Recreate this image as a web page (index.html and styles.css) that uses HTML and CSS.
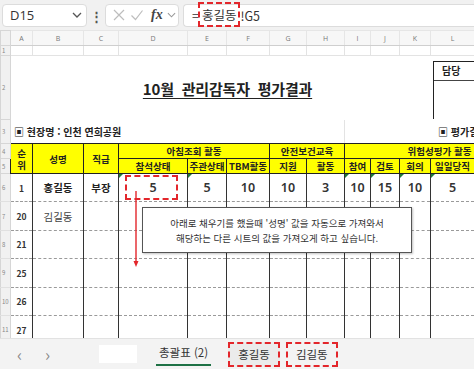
FILE: index.html
```html
<!DOCTYPE html>
<html lang="ko">
  <head>
    <meta charset="UTF-8" />
    <title>평가결과</title>
    <link rel="stylesheet" href="styles.css">
  </head>
  <body>
    <div class="page">
      <div class="topbar">
        <div class="namebox">
          <span>D15</span>
          <svg class="chev" width="10" height="6" viewBox="0 0 10 6"><path d="M1 1l4 4 4-4" fill="none" stroke="#555" stroke-width="1.3"/></svg>
        </div>
        <div class="dots">&#8942;</div>
        <div class="fxbox">
          <svg width="14" height="14" viewBox="0 0 14 14"><path d="M2 2l10 10M12 2L2 12" stroke="#bdbdbd" stroke-width="1.2"/></svg>
          <svg width="14" height="14" viewBox="0 0 14 14"><path d="M1.5 7.5l4 4 7-9" fill="none" stroke="#bdbdbd" stroke-width="1.2"/></svg>
          <span class="fx">fx</span>
          <svg width="9" height="6" viewBox="0 0 10 6"><path d="M1 1l4 4 4-4" fill="none" stroke="#999" stroke-width="1.2"/></svg>
        </div>
        <div class="formula"><span class="eq">=</span><span class="mark">홍길동</span>!G5</div>
      </div>

      <div class="sheet">
        <table class="grid">
          <colgroup>
            <col style="width:10px"><col style="width:22px"><col style="width:51px"><col style="width:35px">
            <col style="width:69px"><col style="width:39px"><col style="width:43px"><col style="width:37px">
            <col style="width:38px"><col style="width:26px"><col style="width:29px"><col style="width:31px">
            <col style="width:44px"><col style="width:60px">
          </colgroup>
          <tr class="colhead">
            <th class="rh"></th><th>A</th><th>B</th><th>C</th><th>D</th><th>E</th><th>F</th><th>G</th>
            <th>H</th><th>I</th><th>J</th><th>K</th><th>L</th><th>M</th>
          </tr>
          <tr class="r-blank">
            <td class="rh">1</td><td></td><td></td><td></td><td></td><td></td><td></td><td></td>
            <td></td><td></td><td></td><td></td><td></td><td></td>
          </tr>
          <tr class="r-title">
            <td class="rh">2</td>
            <td colspan="11" class="title"><span>10월&nbsp; 관리감독자&nbsp; 평가결과</span></td>
            <td colspan="2" class="sign-cell">
              <div class="sign">
                <div class="sign-head">담당</div>
                <div class="sign-body"></div>
              </div>
            </td>
          </tr>
          <tr class="r-site">
            <td class="rh">3</td>
            <td colspan="8" class="site">▣ 현장명 : 인천 연희공원</td>
            <td colspan="3" class="site-gap"></td>
            <td colspan="2" class="site site-right">▣ 평가결과</td>
          </tr>
          <tr class="r-head">
            <td class="rh">4</td>
            <th rowspan="2" class="hd">순<br>위</th>
            <th rowspan="2" class="hd">성명</th>
            <th rowspan="2" class="hd">직급</th>
            <th colspan="3" class="hd">아침조회 활동</th>
            <th colspan="2" class="hd">안전보건교육</th>
            <th colspan="5" class="hd">위험성평가 활동</th>
          </tr>
          <tr class="r-head">
            <td class="rh">5</td>
            <th class="hd">참석상태</th><th class="hd">주관상태</th><th class="hd">TBM활동</th>
            <th class="hd">지원</th><th class="hd">활동</th>
            <th class="hd">참여</th><th class="hd">검토</th><th class="hd">회의</th><th class="hd">일일당직</th><th class="hd">비고</th>
          </tr>
          <tr class="r-data">
            <td class="rh">6</td>
            <td class="no">1</td><td class="name">홍길동</td><td class="name">부장</td>
            <td class="val flag">5</td><td class="val flag">5</td><td class="val">10</td>
            <td class="val">10</td><td class="val">3</td>
            <td class="val flag">10</td><td class="val flag">15</td><td class="val flag">10</td><td class="val flag">5</td><td class="val"></td>
          </tr>
          <tr class="r-data">
            <td class="rh">7</td>
            <td class="no">20</td><td class="name light">김길동</td><td></td>
            <td></td><td></td><td></td><td></td><td></td><td></td><td></td><td></td><td></td><td></td>
          </tr>
          <tr class="r-data">
            <td class="rh">8</td>
            <td class="no">21</td><td></td><td></td>
            <td></td><td></td><td></td><td></td><td></td><td></td><td></td><td></td><td></td><td></td>
          </tr>
          <tr class="r-data">
            <td class="rh">9</td>
            <td class="no">25</td><td></td><td></td>
            <td></td><td></td><td></td><td></td><td></td><td></td><td></td><td></td><td></td><td></td>
          </tr>
          <tr class="r-data">
            <td class="rh">10</td>
            <td class="no">26</td><td></td><td></td>
            <td></td><td></td><td></td><td></td><td></td><td></td><td></td><td></td><td></td><td></td>
          </tr>
          <tr class="r-data">
            <td class="rh">11</td>
            <td class="no">27</td><td></td><td></td>
            <td></td><td></td><td></td><td></td><td></td><td></td><td></td><td></td><td></td><td></td>
          </tr>
        </table>

        <div class="cell-mark"></div>
        <svg class="arrow" width="12" height="80" viewBox="0 0 12 80">
          <path d="M6 1V73" stroke="#e3262b" stroke-width="1.4"/>
          <path d="M3.5 71L6 77 8.5 71z" fill="#e3262b"/>
        </svg>
        <div class="note">
          <p>아래로 채우기를 했을때 '성명' 값을 자동으로 가져와서</p>
          <p>해당하는 다른 시트의 값을 가져오게 하고 싶습니다.</p>
        </div>
      </div>

      <div class="tabbar">
        <span class="nav">&lsaquo;</span>
        <span class="nav">&rsaquo;</span>
        <span class="blank"></span>
        <span class="tab active">총괄표 (2)</span>
        <span class="tab marked shade">홍길동</span>
        <span class="tab marked">김길동</span>
      </div>
    </div>
  </body>
</html>
```

FILE: styles.css
```css
* {
  box-sizing: border-box;
}
body {
  margin: 0;
  background: #fff;
  font-family: "Noto Sans CJK KR", "Noto Sans", sans-serif;
  color: #222;
}
.page {
  position: relative;
  width: 474px;
  height: 369px;
  overflow: hidden;
}

/* formula bar */
.topbar {
  display: flex;
  align-items: center;
  height: 30px;
  padding: 0 0 0 2px;
  background: #f1f1f1;
}
.namebox {
  display: flex;
  align-items: center;
  justify-content: space-between;
  width: 85px;
  height: 23px;
  padding: 0 4px 0 7px;
  background: #fff;
  border: 1px solid #dcdcdc;
  border-radius: 4px;
  font-family: "Open Sans", sans-serif;
  font-size: 13px;
  color: #333;
}
.dots {
  width: 18px;
  text-align: center;
  font-size: 13px;
  font-weight: bold;
  color: #555;
}
.fxbox {
  display: flex;
  align-items: center;
  gap: 4px;
  width: 74px;
  height: 23px;
  padding-left: 6px;
  background: #fff;
  border: 1px solid #dcdcdc;
  border-radius: 4px;
}
.fx {
  margin-left: 3px;
  font-family: "Liberation Serif", serif;
  font-style: italic;
  font-weight: bold;
  font-size: 14px;
  color: #444;
}
.formula {
  flex: 1;
  height: 23px;
  margin-left: 4px;
  padding-left: 8px;
  background: #fff;
  border: 1px solid #dcdcdc;
  border-right: none;
  border-radius: 4px 0 0 4px;
  font-size: 12.5px;
  line-height: 21px;
  color: #333;
}
.eq {
  margin-right: -1px;
}
.mark {
  display: inline-block;
  height: 25px;
  margin-top: -3px;
  padding: 0 2px;
  border: 2px dashed #e3262b;
  line-height: 21px;
  vertical-align: top;
}

/* sheet grid */
.sheet {
  position: relative;
  height: 308px;
  overflow: hidden;
}
.grid {
  border-collapse: collapse;
  table-layout: fixed;
  width: 534px;
}
.grid td,
.grid th {
  padding: 0;
  border: 1px solid #e3e3e3;
  overflow: hidden;
  white-space: nowrap;
  text-align: center;
  font-weight: normal;
}
.grid .rh {
  background: #f1f1f1;
  border-color: #d6d6d6;
  font-size: 6px;
  color: #888;
  text-align: left;
  padding-left: 1px;
}
.colhead {
  height: 15px;
}
.colhead th {
  background: #f7f7f7;
  border-color: #e6e6e6;
  border-bottom-color: #cfcfcf;
  font-family: "Open Sans", sans-serif;
  font-size: 7px;
  color: #777;
}
.r-blank {
  height: 9px;
}
.r-title {
  height: 64px;
}
.grid .title {
  border-color: transparent;
  border-left-color: #e3e3e3;
}
.title span {
  position: relative;
  left: 7px;
  font-size: 15px;
  font-weight: bold;
  text-decoration: underline;
  text-underline-offset: 3px;
  letter-spacing: -0.2px;
}
.grid .sign-cell {
  vertical-align: bottom;
  border-color: transparent;
}
.sign {
  height: 58px;
  margin-left: 2px;
  border: 1.5px solid #222;
  border-bottom: none;
}
.sign-head {
  height: 19px;
  border-bottom: 1px solid #444;
  text-align: left;
  padding-left: 8px;
  font-size: 10px;
  font-weight: bold;
  line-height: 18px;
}
.r-site {
  height: 24px;
}
.grid .site {
  text-align: left;
  padding-left: 3px;
  font-size: 10px;
  font-weight: bold;
  border-bottom-color: #222;
}
.grid .site-gap {
  border-bottom-color: #222;
  border-right-color: transparent;
}
.grid .site-right {
  padding-left: 7px;
  border-left-color: transparent;
}
.r-head {
  height: 15px;
}
.grid .hd {
  background: #ffff00;
  border: 1px solid #222;
  font-size: 9.5px;
  font-weight: bold;
  line-height: 12px;
  color: #222;
}
.r-data {
  height: 28.4px;
}
.r-data td {
  border-left: 1px solid #333;
  border-right: 1px solid #333;
  border-top: 1px dashed #9a9a9a;
  border-bottom: 1px dashed #9a9a9a;
}
.grid .r-data .rh {
  border-left-color: #d6d6d6;
  border-right-color: #d6d6d6;
  border-top: 1px solid #e0e0e0;
  border-bottom: 1px solid #e0e0e0;
}
.grid .no {
  font-size: 8.5px;
  font-weight: bold;
  color: #333;
}
.grid .name {
  font-size: 10.5px;
  font-weight: bold;
}
.grid .light {
  font-weight: normal;
  color: #444;
}
.grid .val {
  font-family: "Noto Sans", sans-serif;
  font-size: 12.5px;
  font-weight: 600;
  color: #333;
}
.flag {
  position: relative;
}
.flag::before {
  content: "";
  position: absolute;
  left: 0;
  top: 0;
  border-top: 4px solid #1f7a3d;
  border-right: 4px solid transparent;
}

/* overlays */
.cell-mark {
  position: absolute;
  left: 125px;
  top: 145px;
  width: 53px;
  height: 25px;
  border: 2px dashed #e3262b;
}
.arrow {
  position: absolute;
  left: 130px;
  top: 160px;
}
.note {
  position: absolute;
  left: 142px;
  top: 177px;
  width: 270px;
  height: 46px;
  padding-top: 8px;
  background: #fff;
  border: 1px solid #555;
  box-shadow: 1px 1px 2px rgba(0, 0, 0, 0.25);
  text-align: center;
  font-size: 9.5px;
  line-height: 15px;
  color: #333;
}
.note p {
  margin: 0;
}

/* sheet tabs */
.tabbar {
  display: flex;
  align-items: center;
  height: 31px;
  padding-left: 17px;
  background: #f3f3f3;
  border-top: 1px solid #e2e2e2;
}
.nav {
  width: 28px;
  font-size: 17px;
  color: #888;
  line-height: 20px;
}
.blank {
  width: 38px;
  height: 18px;
  margin-left: 26px;
  background: #fff;
}
.tab {
  height: 25px;
  padding: 0 8px;
  font-size: 11.5px;
  line-height: 21px;
  color: #333;
}
.active {
  margin-left: 19px;
  padding: 0 3px;
  height: 24px;
  border-bottom: 2px solid #1e7145;
  margin-right: 17px;
}
.marked {
  border: 2px dashed #e3262b;
  margin-right: 6px;
}
.shade {
  background: #ebebeb;
}
```
